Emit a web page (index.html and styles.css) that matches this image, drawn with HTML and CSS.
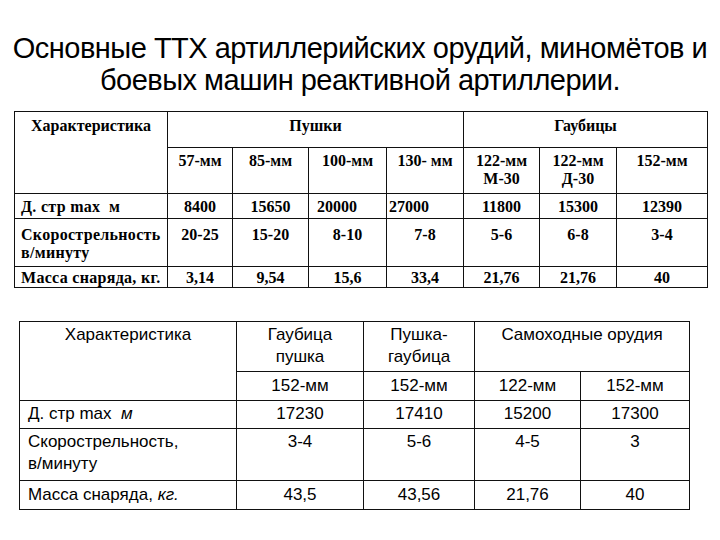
FILE: index.html
```html
<!DOCTYPE html>
<html lang="ru">
<head>
<meta charset="utf-8">
<title>ТТХ артиллерии</title>
<link rel="stylesheet" href="styles.css">
</head>
<body>
<div class="page">
  <h1 class="title">Основные ТТХ артиллерийских орудий, миномётов и<br>боевых машин реактивной артиллерии.</h1>

  <table class="t1">
    <colgroup>
      <col class="a1"><col class="a2"><col class="a3"><col class="a4"><col class="a5"><col class="a6"><col class="a7"><col class="a8">
    </colgroup>
    <tr class="r1">
      <th rowspan="2" class="top">Характеристика</th>
      <th colspan="4">Пушки</th>
      <th colspan="3">Гаубицы</th>
    </tr>
    <tr class="r2">
      <th>57-мм</th><th>85-мм</th><th>100-мм</th><th>130- мм</th>
      <th>122-мм<br>М-30</th><th>122-мм<br>Д-30</th><th>152-мм</th>
    </tr>
    <tr class="r3">
      <td class="lbl">Д. стр max&nbsp; м</td>
      <td>8400</td><td>15650</td><td class="lft">20000</td><td class="lft2">27000</td><td>11800</td><td>15300</td><td>12390</td>
    </tr>
    <tr class="r4">
      <td class="lbl">Скорострельность в/минуту</td>
      <td>20-25</td><td>15-20</td><td>8-10</td><td>7-8</td><td>5-6</td><td>6-8</td><td>3-4</td>
    </tr>
    <tr class="r5">
      <td class="lbl">Масса снаряда, кг.</td>
      <td>3,14</td><td>9,54</td><td>15,6</td><td>33,4</td><td>21,76</td><td>21,76</td><td>40</td>
    </tr>
  </table>

  <table class="t2">
    <colgroup>
      <col class="b1"><col class="b2"><col class="b3"><col class="b4"><col class="b5">
    </colgroup>
    <tr class="s1">
      <th rowspan="2">Характеристика</th>
      <th>Гаубица<br>пушка</th>
      <th>Пушка-<br>гаубица</th>
      <th colspan="2">Самоходные орудия</th>
    </tr>
    <tr class="s2">
      <th>152-мм</th><th>152-мм</th><th>122-мм</th><th>152-мм</th>
    </tr>
    <tr class="s3">
      <td class="lbl">Д. стр max&nbsp; <i>м</i></td>
      <td>17230</td><td>17410</td><td>15200</td><td>17300</td>
    </tr>
    <tr class="s4">
      <td class="lbl">Скорострельность,<br>в/минуту</td>
      <td>3-4</td><td>5-6</td><td>4-5</td><td>3</td>
    </tr>
    <tr class="s5">
      <td class="lbl">Масса снаряда, <i>кг.</i></td>
      <td>43,5</td><td>43,56</td><td>21,76</td><td>40</td>
    </tr>
  </table>
</div>
</body>
</html>
```

FILE: styles.css
```css
html, body {
  margin: 0;
  padding: 0;
  background: #ffffff;
  color: #000000;
}

.page {
  width: 720px;
  height: 540px;
  display: flex;
  flex-direction: column;
  align-items: flex-start;
  padding-top: 32px;
  box-sizing: border-box;
}

.title {
  align-self: stretch;
  margin: 0;
  font-family: "Liberation Sans", Arial, sans-serif;
  font-weight: normal;
  font-size: 29px;
  letter-spacing: -0.5px;
  line-height: 32px;
  text-align: center;
  color: #000;
}

/* ---------- first table (serif) ---------- */
.t1 {
  margin: 15px 0 0 14px;
  border-collapse: collapse;
  table-layout: fixed;
  width: 693px;
  font-family: "Liberation Serif", "Times New Roman", serif;
  font-weight: bold;
  font-size: 16px;
  line-height: 18px;
}
.t1 col.a1 { width: 153px; }
.t1 col.a2 { width: 65px; }
.t1 col.a3 { width: 76px; }
.t1 col.a4 { width: 78px; }
.t1 col.a5 { width: 77px; }
.t1 col.a6 { width: 76px; }
.t1 col.a7 { width: 77px; }
.t1 col.a8 { width: 91px; }

.t1 th, .t1 td {
  border: 1px solid #111;
  padding: 4px 2px 0 2px;
  vertical-align: top;
  text-align: center;
  font-weight: bold;
}
.t1 .r1 { height: 36px; }
.t1 .r1 th { padding-top: 5px; }
.t1 .r2 { height: 46px; }
.t1 .r3 { height: 25px; }
.t1 .r4 { height: 48px; }
.t1 .r4 td { padding-top: 7px; }
.t1 .r5 { height: 21px; }
.t1 .r5 td { padding-top: 2px; }
.t1 td.lbl {
  text-align: left;
  padding-left: 6px;
  letter-spacing: 0.3px;
}
.t1 td.lft { text-align: left; padding-left: 8px; }
.t1 td.lft2 { text-align: left; padding-left: 2px; }

/* ---------- second table (sans) ---------- */
.t2 {
  margin: 33px 0 0 19px;
  border-collapse: collapse;
  table-layout: fixed;
  width: 670px;
  font-family: "Liberation Sans", Arial, sans-serif;
  font-size: 17px;
  line-height: 22px;
}
.t2 col.b1 { width: 217px; }
.t2 col.b2 { width: 127px; }
.t2 col.b3 { width: 111px; }
.t2 col.b4 { width: 106px; }
.t2 col.b5 { width: 109px; }

.t2 th, .t2 td {
  border: 1px solid #111;
  padding: 2px 2px 0 2px;
  vertical-align: top;
  text-align: center;
  font-weight: normal;
}
.t2 .s1 { height: 50px; }
.t2 .s2 { height: 29px; }
.t2 .s2 th { padding-top: 3px; }
.t2 .s3 { height: 28px; }
.t2 .s4 { height: 52px; }
.t2 .s5 { height: 29px; }
.t2 .s5 td { padding-top: 3px; }
.t2 td.lbl {
  text-align: left;
  padding-left: 8px;
}
.t2 i { font-style: italic; }
```
